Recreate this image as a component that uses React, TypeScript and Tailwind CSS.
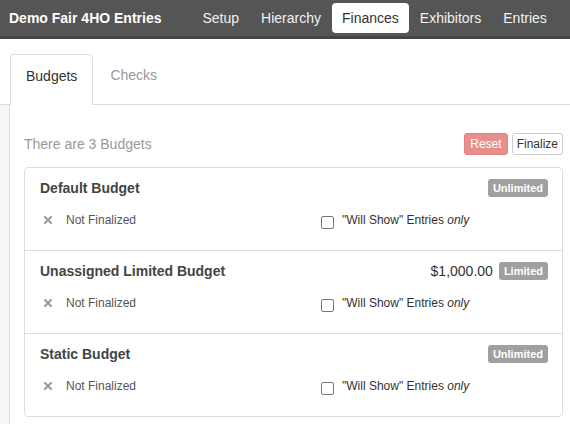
import React from "react";

const font = { fontFamily: '"Liberation Sans", Arial, sans-serif' };

function XIcon() {
  return (
    <svg width="8" height="8" viewBox="0 0 8 8" className="block">
      <path d="M1 1 L7 7 M7 1 L1 7" stroke="#9a9a9a" strokeWidth="2" strokeLinecap="square" />
    </svg>
  );
}

function Badge({ children }: { children: React.ReactNode }) {
  return (
    <span className="inline-block rounded-[3px] bg-[#a0a0a0] px-[5px] text-[11px] font-bold leading-[18px] text-white">
      {children}
    </span>
  );
}

function Row({ title, amount, badge, last }: { title: string; amount?: string; badge: string; last?: boolean }) {
  return (
    <div className={`pl-[15px] pr-[14px] pt-[10px] pb-[20px] ${last ? "" : "border-b border-[#ddd]"}`}>
      <div className="flex h-[20px] items-center justify-between">
        <div className="text-[14px] font-bold leading-[20px] text-[#444]">{title}</div>
        <div className="flex items-center gap-[6px]">
          {amount && <span className="text-[14px] leading-[20px] text-[#333]">{amount}</span>}
          <Badge>{badge}</Badge>
        </div>
      </div>
      <div className="mt-[12px] flex h-[20px] items-center">
        <div className="flex w-[281px] items-center">
          <span className="flex w-[16px] justify-center">
            <XIcon />
          </span>
          <span className="ml-[10px] text-[12px] leading-[20px] text-[#555]">Not Finalized</span>
        </div>
        <div className="flex items-center">
          <span className="mt-[4px] inline-block h-[13px] w-[13px] rounded-[2px] border border-[#767676] bg-white" />
          <span className="ml-[8px] text-[12px] leading-[20px] text-[#333]">
            "Will Show" Entries <i>only</i>
          </span>
        </div>
      </div>
    </div>
  );
}

export default function App() {
  const navItems = ["Setup", "Hierarchy", "Finances", "Exhibitors", "Entries"];
  return (
    <div className="h-[424px] w-[570px] overflow-hidden bg-white" style={font}>
      <div className="flex h-[39px] items-center border-b-[3px] border-[#444] bg-[#555] pl-[9px]">
        <div className="text-[14px] font-bold leading-[20px] text-white">Demo Fair 4HO Entries</div>
        <div className="ml-[30px] flex items-center">
          {navItems.map((n) =>
            n === "Finances" ? (
              <span key={n} className="flex h-[30px] items-center rounded-[4px] bg-white px-[10px] text-[14px] text-[#333]">
                {n}
              </span>
            ) : (
              <span key={n} className="flex h-[30px] items-center px-[11px] text-[14px] text-[#f2f2f2]">
                {n}
              </span>
            )
          )}
        </div>
      </div>

      <div className="flex items-end gap-[2px] border-b border-[#ddd] pl-[10px] pt-[15px]">
        <div className="-mb-px rounded-t-[4px] border border-b-0 border-[#ddd] bg-white px-[15px] pb-[19px] pt-[11px] text-[14px] leading-[20px] text-[#333]">
          Budgets
        </div>
        <div className="px-[15px] pb-[19px] pt-[11px] text-[14px] leading-[20px] text-[#999]">Checks</div>
      </div>

      <div className="flex h-[330px]">
        <div className="w-[9px] bg-[#f7f7f7]" />
        <div className="flex-1 border-l border-[#ddd] pl-[14px] pr-[7px] pt-[28px]">
          <div className="flex items-center justify-between">
            <span className="text-[14px] leading-[20px] text-[#999]">There are 3 Budgets</span>
            <div className="flex gap-[4px]">
              <span className="rounded-[3px] border border-[#e3827f] bg-[#e68f8c] px-[5px] py-[1px] text-[12px] leading-[18px] text-white">
                Reset
              </span>
              <span className="rounded-[3px] border border-[#ccc] bg-white px-[4px] py-[1px] text-[12px] leading-[18px] text-[#333]">
                Finalize
              </span>
            </div>
          </div>
          <div className="mt-[12px] rounded-[4px] border border-[#ddd] bg-white">
            <Row title="Default Budget" badge="Unlimited" />
            <Row title="Unassigned Limited Budget" amount="$1,000.00" badge="Limited" />
            <Row title="Static Budget" badge="Unlimited" last />
          </div>
        </div>
      </div>
    </div>
  );
}
